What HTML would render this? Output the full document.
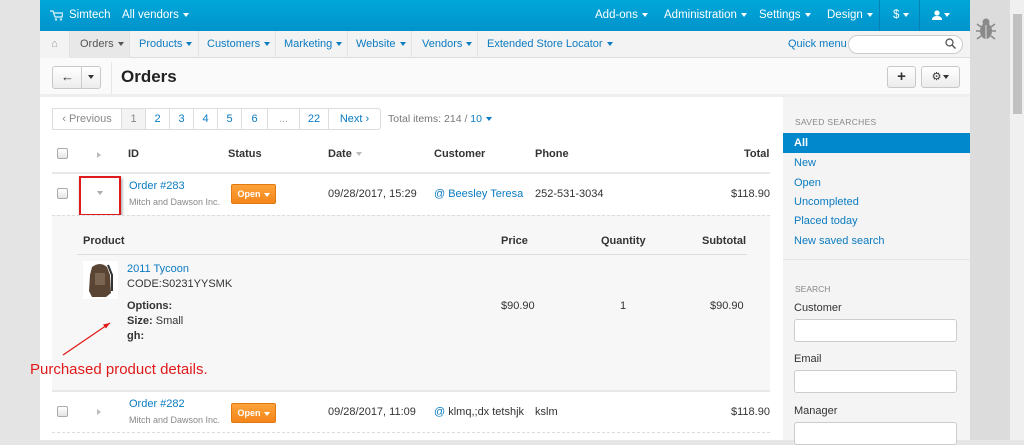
<!DOCTYPE html>
<html><head><style>
*{box-sizing:border-box;margin:0;padding:0}
body{width:1024px;height:440px;overflow:hidden;background:#e6e6e6;font-family:"Liberation Sans",Arial,sans-serif;font-size:11px;color:#333;position:relative}
.a{position:absolute;white-space:nowrap}
.blue{color:#0b7bc1}
.c{display:inline-block;width:0;height:0;border-left:3.5px solid transparent;border-right:3.5px solid transparent;border-top:4px solid currentColor;vertical-align:middle;margin-left:4px}
.top{left:40px;top:0;width:930px;height:31px;background:linear-gradient(#00a7d8,#0093cc);color:#fff;font-size:11.5px}
.nav{left:40px;top:31px;width:930px;height:27px;background:#f3f3f3;border-bottom:1px solid #ddd}
.nav span{position:absolute;top:0;height:27px;line-height:26px;color:#0b7bc1;font-size:11px;border-right:1px solid #e2e2e2}
.tb{left:40px;top:58px;width:930px;height:39px;background:#fafafa;border-bottom:3px solid #eee}
.btn{position:absolute;border:1px solid #c8c8c8;border-radius:3px;background:linear-gradient(#fff,#ececec)}
.main{left:40px;top:97px;width:743px;height:343px;background:#fff}
.side{left:783px;top:97px;width:187px;height:343px;background:#f4f4f4}
.pg{position:absolute;top:108px;height:22px;border:1px solid #ddd;line-height:20px;text-align:center;color:#0b7bc1;background:#fff}
.cb{position:absolute;width:11px;height:11px;border:1px solid #aaa;border-radius:2px;background:linear-gradient(#fff,#e4e4e4)}
.open{position:absolute;width:45px;height:20px;background:linear-gradient(#fda33a,#f5861b);border:1px solid #e07a10;border-radius:2px;color:#fff;font-size:9px;line-height:18px;text-align:center;font-weight:bold}
.inp{position:absolute;left:794px;width:163px;height:23px;background:#fff;border:1px solid #ccc;border-radius:3px}
.tri{position:absolute;width:0;height:0;border-top:3px solid transparent;border-bottom:3px solid transparent;border-left:4px solid #bbb}
b{font-weight:bold}
</style></head><body>
<div class="a" style="left:0;top:0;width:40px;height:440px;background:#e4e4e4"></div>
<div class="a" style="left:970px;top:0;width:40px;height:440px;background:#dcdcdc"></div>
<div class="a" style="left:1010px;top:0;width:14px;height:440px;background:#f0f0f0"></div>
<div class="a" style="left:1013px;top:14px;width:9px;height:100px;background:#c1c1c1"></div>
<svg class="a" style="left:975px;top:16px" width="22" height="26" viewBox="0 0 22 26"><g fill="#8a8a8a"><ellipse cx="11" cy="15" rx="6" ry="8"/><circle cx="11" cy="6" r="3.5"/><path d="M2 8l4 3M20 8l-4 3M1 15h5M21 15h-5M2 23l4-3M20 23l-4-3" stroke="#8a8a8a" stroke-width="1.6"/></g><path d="M11 9v14" stroke="#dcdcdc"/></svg>

<div class="a top">
 <svg class="a" style="left:10px;top:10px" width="13" height="11"><path d="M0 1h3l2 6h7l1-4H4" stroke="#bfe6f5" stroke-width="1.5" fill="none"/><circle cx="6" cy="9.5" r="1.2" fill="#bfe6f5"/><circle cx="11" cy="9.5" r="1.2" fill="#bfe6f5"/></svg>
 <span class="a" style="left:29px;top:9px">Simtech</span>
 <span class="a" style="left:82px;top:9px">All vendors<i class="c"></i></span>
 <span class="a" style="left:555px;top:9px">Add-ons<i class="c"></i></span>
 <span class="a" style="left:624px;top:9px">Administration<i class="c"></i></span>
 <span class="a" style="left:719px;top:9px">Settings<i class="c"></i></span>
 <span class="a" style="left:787px;top:9px">Design<i class="c"></i></span>
 <div class="a" style="left:839px;top:0;width:1px;height:31px;background:#0782b4"></div>
 <span class="a" style="left:853px;top:9px">$<i class="c"></i></span>
 <div class="a" style="left:879px;top:0;width:1px;height:31px;background:#0782b4"></div>
 <svg class="a" style="left:892px;top:10px" width="10" height="10"><circle cx="5" cy="3" r="2.6" fill="#fff"/><path d="M0 10q0-4 5-4t5 4z" fill="#fff"/></svg>
 <span class="a" style="left:900px;top:9px"><i class="c"></i></span>
</div>
<div class="a nav">
 <span style="left:0;width:30px;text-align:center;color:#999;background:#f3f3f3">&#8962;</span>
 <span style="left:30px;width:60px;padding-left:10px;color:#555;background:#e8e8e8">Orders<i class="c"></i></span>
 <span style="left:90px;width:69px;padding-left:9px">Products<i class="c"></i></span>
 <span style="left:159px;width:77px;padding-left:8px">Customers<i class="c"></i></span>
 <span style="left:236px;width:72px;padding-left:8px">Marketing<i class="c"></i></span>
 <span style="left:308px;width:64px;padding-left:8px">Website<i class="c"></i></span>
 <span style="left:372px;width:66px;padding-left:10px">Vendors<i class="c"></i></span>
 <span style="left:438px;width:130px;padding-left:9px;border:none">Extended Store Locator<i class="c"></i></span>
 <span style="left:748px;border:none">Quick menu</span>
 <div class="a" style="left:808px;top:4px;width:115px;height:19px;background:#fff;border:1px solid #ccc;border-radius:10px"></div>
 <svg class="a" style="left:905px;top:7px" width="11" height="11"><circle cx="4.5" cy="4.5" r="3.5" stroke="#555" stroke-width="1.3" fill="none"/><path d="M7 7l3.5 3.5" stroke="#555" stroke-width="1.5"/></svg>
</div>
<div class="a tb">
 <div class="btn" style="left:12px;top:8px;width:49px;height:23px"></div>
 <div class="a" style="left:41px;top:8px;width:1px;height:23px;background:#ccc"></div>
 <span class="a" style="left:21px;top:11px;font-size:13px;font-weight:bold">&#8592;</span>
 <span class="a" style="left:44px;top:13px;color:#333"><i class="c"></i></span>
 <div class="a" style="left:71px;top:4px;width:1px;height:32px;background:#e6e6e6"></div>
 <span class="a" style="left:81px;top:9px;font-size:17px;font-weight:bold;color:#222">Orders</span>
 <div class="btn" style="left:847px;top:8px;width:29px;height:22px;text-align:center;font-size:15px;font-weight:bold;line-height:19px">+</div>
 <div class="btn" style="left:881px;top:8px;width:39px;height:22px;text-align:center;font-size:11px;line-height:20px">&#9881;<i class="c" style="margin-left:2px"></i></div>
</div>
<div class="a main"></div>
<div class="a side"></div>
<div class="pg" style="left:52px;width:70px;color:#888">&lsaquo; Previous</div>
<div class="pg" style="left:121px;width:25px;background:#f3f3f3;color:#888">1</div>
<div class="pg" style="left:145px;width:25px">2</div>
<div class="pg" style="left:169px;width:25px">3</div>
<div class="pg" style="left:193px;width:25px">4</div>
<div class="pg" style="left:217px;width:25px">5</div>
<div class="pg" style="left:241px;width:27px">6</div>
<div class="pg" style="left:267px;width:33px;color:#aaa">...</div>
<div class="pg" style="left:299px;width:30px">22</div>
<div class="pg" style="left:328px;width:53px;border-radius:0 3px 3px 0">Next &rsaquo;</div>
<span class="a" style="left:388px;top:113px;color:#777;font-size:10.5px">Total items: 214 / <span class="blue">10<i class="c"></i></span></span>

<div class="cb" style="left:57px;top:148px"></div>
<div class="tri" style="left:97px;top:152px"></div>
<span class="a" style="left:128px;top:148px;font-weight:bold">ID</span>
<span class="a" style="left:228px;top:148px;font-weight:bold">Status</span>
<span class="a" style="left:328px;top:148px;font-weight:bold">Date<i class="c" style="color:#bbb"></i></span>
<span class="a" style="left:434px;top:148px;font-weight:bold">Customer</span>
<span class="a" style="left:535px;top:148px;font-weight:bold">Phone</span>
<span class="a" style="left:744px;top:148px;font-weight:bold">Total</span>
<div class="a" style="left:52px;top:172px;width:718px;height:2px;background:#e8e8e8"></div>

<div class="cb" style="left:57px;top:188px"></div>
<div class="a" style="left:79px;top:176px;width:42px;height:40px;border:2px solid #e01a1a;box-shadow:1px 2px 3px #999"></div>
<span class="a" style="left:93px;top:187px;color:#aaa"><i class="c"></i></span>
<span class="a blue" style="left:129px;top:180px;font-size:11px">Order #283</span>
<span class="a" style="left:129px;top:197px;color:#888;font-size:9px">Mitch and Dawson Inc.</span>
<div class="open" style="left:231px;top:184px">Open<i class="c" style="margin-left:3px"></i></div>
<span class="a" style="left:328px;top:188px">09/28/2017, 15:29</span>
<span class="a blue" style="left:434px;top:188px">@ Beesley Teresa</span>
<span class="a" style="left:535px;top:188px">252-531-3034</span>
<span class="a" style="left:731px;top:188px">$118.90</span>

<div class="a" style="left:52px;top:215px;width:718px;height:175px;background:#f7f7f7;border-top:1px dashed #ddd"></div>
<span class="a" style="left:83px;top:235px;font-weight:bold">Product</span>
<span class="a" style="left:501px;top:235px;font-weight:bold">Price</span>
<span class="a" style="left:601px;top:235px;font-weight:bold">Quantity</span>
<span class="a" style="left:702px;top:235px;font-weight:bold">Subtotal</span>
<div class="a" style="left:77px;top:254px;width:670px;height:1px;background:#ddd"></div>
<svg class="a" style="left:83px;top:261px" width="35" height="38"><rect width="35" height="38" fill="#fff"/><path d="M9 6q8-6 15 0l3 8 1 18-5 4h-14l-3-6 1-16z" fill="#5a4535"/><path d="M12 12h10v12h-10z" fill="#7a6552"/><path d="M25 4l4 10v16" stroke="#333" fill="none" stroke-width="2"/></svg>
<span class="a blue" style="left:127px;top:263px">2011 Tycoon</span>
<span class="a" style="left:127px;top:278px">CODE:S0231YYSMK</span>
<span class="a" style="left:127px;top:300px;font-weight:bold">Options:</span>
<span class="a" style="left:127px;top:315px"><b>Size:</b> Small</span>
<span class="a" style="left:127px;top:330px;font-weight:bold">gh:</span>
<span class="a" style="left:501px;top:300px">$90.90</span>
<span class="a" style="left:620px;top:300px">1</span>
<span class="a" style="left:710px;top:300px">$90.90</span>
<svg class="a" style="left:60px;top:318px" width="55" height="40"><path d="M3 37L50 5" stroke="#e01a1a" stroke-width="1.3"/><path d="M50 5l-7 1.5 3 4z" fill="#e01a1a"/></svg>
<span class="a" style="left:30px;top:361px;color:#e01a1a;font-size:15px">Purchased product details.</span>

<div class="a" style="left:52px;top:390px;width:718px;height:2px;background:#e8e8e8"></div>
<div class="cb" style="left:57px;top:406px"></div>
<div class="tri" style="left:97px;top:409px"></div>
<span class="a blue" style="left:129px;top:398px">Order #282</span>
<span class="a" style="left:129px;top:415px;color:#888;font-size:9px">Mitch and Dawson Inc.</span>
<div class="open" style="left:231px;top:403px">Open<i class="c" style="margin-left:3px"></i></div>
<span class="a" style="left:328px;top:406px">09/28/2017, 11:09</span>
<span class="a" style="left:434px;top:406px"><span class="blue">@</span> klmq,;dx tetshjk</span>
<span class="a" style="left:535px;top:406px">kslm</span>
<span class="a" style="left:731px;top:406px">$118.90</span>
<div class="a" style="left:52px;top:432px;width:718px;height:1px;border-top:1px dashed #ddd"></div>

<span class="a" style="left:795px;top:117px;color:#888;font-size:8.5px;letter-spacing:.3px">SAVED SEARCHES</span>
<div class="a" style="left:783px;top:133px;width:187px;height:20px;background:#0087cc"></div>
<span class="a" style="left:794px;top:137px;color:#fff;font-weight:bold">All</span>
<span class="a blue" style="left:794px;top:157px">New</span>
<span class="a blue" style="left:794px;top:177px">Open</span>
<span class="a blue" style="left:794px;top:196px">Uncompleted</span>
<span class="a blue" style="left:794px;top:215px">Placed today</span>
<span class="a blue" style="left:794px;top:235px">New saved search</span>
<div class="a" style="left:783px;top:259px;width:187px;height:1px;background:#e6e6e6"></div>
<span class="a" style="left:795px;top:284px;color:#888;font-size:8.5px">SEARCH</span>
<span class="a" style="left:794px;top:302px">Customer</span>
<div class="inp" style="top:319px"></div>
<span class="a" style="left:794px;top:353px">Email</span>
<div class="inp" style="top:370px"></div>
<span class="a" style="left:794px;top:405px">Manager</span>
<div class="inp" style="top:422px"></div>
</body></html>
